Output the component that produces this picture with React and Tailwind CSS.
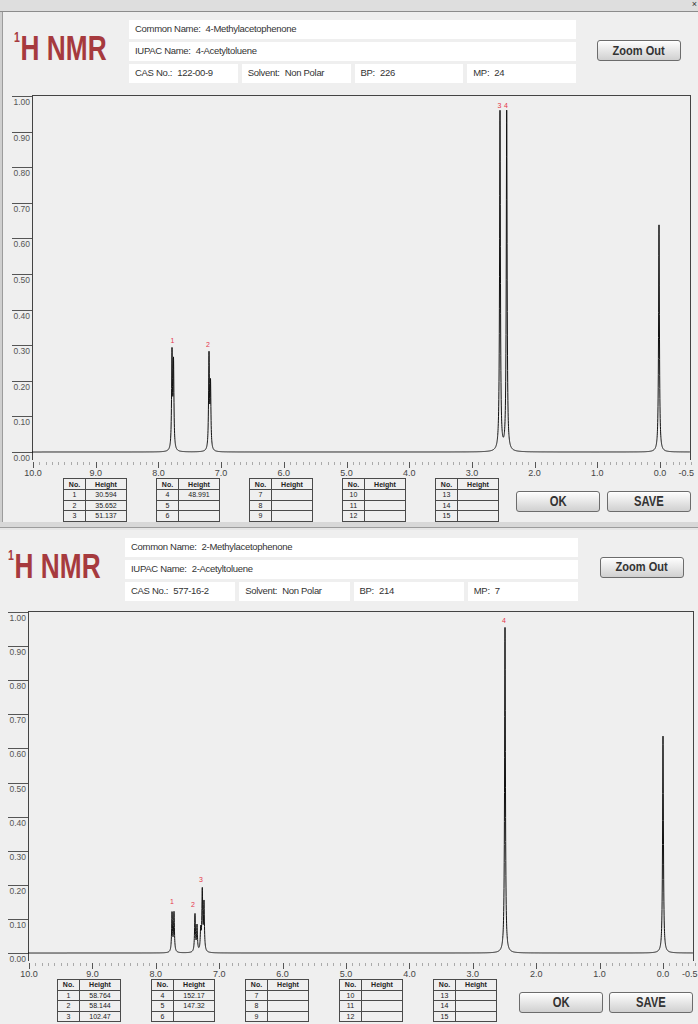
import React from "react";

const FONT = "font-['Liberation_Sans',Arial,sans-serif]";

const emptyRows = (from) => [
  [from, ""],
  [from + 1, ""],
  [from + 2, ""],
];

const panels = [
  {
    id: "p1",
    common: "4-Methylacetophenone",
    iupac: "4-Acetyltoluene",
    cas: "122-00-9",
    solvent: "Non Polar",
    bp: "226",
    mp: "24",
    panelClass: "shadow-[inset_2px_0_0_#cfcfcf,inset_3px_0_0_#9c9c9c]",
    titleCol: "w-[129px] pl-[14px]",
    infoCol: "w-[447px]",
    zoomBtn: "ml-[21px] mt-[20px]",
    chartGap: "mt-[10px]",
    tableRow: "pl-[63px]",
    tableGap: "gap-[29px]",
    btnRow: "ml-[17px] gap-[7px]",
    chart: { base: 359, x0: 660, k: 62.7, axisX: 32, rightX: 690, negShift: 5 },
    peaks: [
      { ppm: 7.783, h: 0.27 },
      { ppm: 7.759, h: 0.24 },
      { ppm: 7.193, h: 0.265 },
      { ppm: 7.169, h: 0.18 },
      { ppm: 2.552, h: 0.955 },
      { ppm: 2.445, h: 0.955 },
      { ppm: 0.016, h: 0.638 },
    ],
    labels: [
      { t: "1", x: 172.5, y: 250 },
      { t: "2", x: 208, y: 254 },
      { t: "3", x: 499.5, y: 15 },
      { t: "4", x: 506, y: 15 },
    ],
    tables: [
      [[1, "30.594"], [2, "35.652"], [3, "51.137"]],
      [[4, "48.991"], [5, ""], [6, ""]],
      emptyRows(7),
      emptyRows(10),
      emptyRows(13),
    ],
  },
  {
    id: "p2",
    common: "2-Methylacetophenone",
    iupac: "2-Acetyltoluene",
    cas: "577-16-2",
    solvent: "Non Polar",
    bp: "214",
    mp: "7",
    panelClass: "",
    titleCol: "w-[125px] pl-[8px]",
    infoCol: "w-[453px]",
    zoomBtn: "ml-[22px] mt-[19px]",
    chartGap: "mt-[8px]",
    tableRow: "pl-[57px]",
    tableGap: "gap-[30px]",
    btnRow: "ml-[22px] gap-[6px]",
    chart: { base: 344, x0: 663, k: 63.4, axisX: 28, rightX: 693, negShift: 5 },
    peaks: [
      { ppm: 7.744, h: 0.115 },
      { ppm: 7.713, h: 0.115 },
      { ppm: 7.382, h: 0.11 },
      { ppm: 7.35, h: 0.075 },
      { ppm: 7.292, h: 0.06 },
      { ppm: 7.267, h: 0.175 },
      { ppm: 7.24, h: 0.14 },
      { ppm: 2.492, h: 0.955 },
      { ppm: 0.0, h: 0.636 },
    ],
    labels: [
      { t: "1", x: 172, y: 904 - 609 },
      { t: "2", x: 193, y: 907 - 609 },
      { t: "3", x: 201, y: 882 - 609 },
      { t: "4", x: 504, y: 623 - 609 },
    ],
    tables: [
      [[1, "58.764"], [2, "58.144"], [3, "102.47"]],
      [[4, "152.17"], [5, "147.32"], [6, ""]],
      emptyRows(7),
      emptyRows(10),
      emptyRows(13),
    ],
  },
];

function Spectrum({ chart, peaks, labels }) {
  const { base, x0, k, axisX, rightX, negShift } = chart;
  const top = 3;
  const yOf = (v) => base - v * (base - top);
  const xOf = (ppm) => x0 - k * ppm;
  const w = 0.5;

  // lorentzian lines summed over the whole axis
  const pts = [];
  for (let x = axisX; x <= rightX; x += 0.1) {
    let v = 0;
    for (const p of peaks) {
      const dx = (x - xOf(p.ppm)) / w;
      v += p.h / (1 + dx * dx);
    }
    pts.push(`${x.toFixed(1)},${yOf(v).toFixed(2)}`);
  }

  const yTicks = [];
  for (let i = 0; i <= 10; i++) {
    const v = i / 10;
    const y = Math.round(yOf(v)) + 0.5;
    yTicks.push(
      <g key={i}>
        <line x1={axisX - 20} y1={y} x2={axisX} y2={y} stroke="#555" strokeWidth="1" />
        <text x={axisX - 2} y={y + 8} fontSize="8.5" fill="#555" textAnchor="end">
          {v.toFixed(2)}
        </text>
      </g>
    );
  }

  const xTicks = [];
  for (let i = 0; i <= 105; i++) {
    const ppm = 10 - i / 10;
    const x = Math.round(xOf(ppm)) + 0.5;
    const major = i % 10 === 0;
    xTicks.push(
      <line
        key={i}
        x1={x}
        y1={base + 10}
        x2={x}
        y2={base + (major ? 16 : 13)}
        stroke={major ? "#555" : "#aaa"}
        strokeWidth="1"
      />
    );
  }

  const xLabels = [];
  for (let n = 10; n >= 0; n--) {
    xLabels.push(
      <text key={n} x={xOf(n)} y={base + 24} fontSize="9" fill="#444" textAnchor="middle">
        {n.toFixed(1)}
      </text>
    );
  }
  xLabels.push(
    <text key="neg" x={xOf(-0.5) - negShift} y={base + 24} fontSize="9" fill="#444" textAnchor="middle">
      -0.5
    </text>
  );

  const ax = axisX + 0.5;
  const rx = rightX + 0.5;

  return (
    <svg
      width="698"
      height={base + 26}
      className="block"
      fontFamily="Liberation Sans, Arial, sans-serif"
    >
      {yTicks}
      <line x1={ax} y1={2} x2={ax} y2={base + 8} stroke="#444" strokeWidth="1" />
      <line x1={ax} y1={2.5} x2={rx} y2={2.5} stroke="#444" strokeWidth="1" />
      <line x1={rx} y1={2} x2={rx} y2={base + 8} stroke="#444" strokeWidth="1" />
      <polyline points={pts.join(" ")} fill="none" stroke="#111" strokeWidth="1" />
      {xTicks}
      {xLabels}
      {labels.map((l) => (
        <text key={l.t} x={l.x} y={l.y} fontSize="7" fill="#e5364a" textAnchor="middle">
          {l.t}
        </text>
      ))}
    </svg>
  );
}

function PeakTable({ rows }) {
  return (
    <table className="w-[64px] border-collapse border border-[#4a4a4a] text-[7px] leading-none text-[#222]">
      <thead>
        <tr className="h-[11px]">
          <th className="w-[22px] border border-[#4a4a4a] font-bold">No.</th>
          <th className="border border-[#4a4a4a] font-bold">Height</th>
        </tr>
      </thead>
      <tbody>
        {rows.map(([n, h]) => (
          <tr key={n} className="h-[10.5px]">
            <td className="border border-[#4a4a4a] text-center">{n}</td>
            <td className="border border-[#4a4a4a] text-center">{h}</td>
          </tr>
        ))}
      </tbody>
    </table>
  );
}

function Button({ children, className, textClass }) {
  return (
    <button
      type="button"
      className={`flex items-center justify-center rounded-[3px] border border-[#6c6c6c] bg-linear-to-b from-[#fefefe] to-[#d0d0d0] font-bold text-[#333] shadow-[inset_0_1px_0_#fff] ${className}`}
    >
      <span className={`inline-block ${textClass}`}>{children}</span>
    </button>
  );
}

function InfoBox({ label, value, className = "" }) {
  return (
    <div className={`flex items-center bg-white px-[6px] text-[9.5px] tracking-[-0.3px] text-[#333] ${className}`}>
      <span>{label}</span>
      <span className="ml-[5px]">{value}</span>
    </div>
  );
}

function NmrPanel({ p }) {
  return (
    <div className={`bg-[#efefef] pt-[8px] ${p.panelClass}`}>
      <div className="flex items-start">
        <div className={`mt-[10px] ${p.titleCol}`}>
          <div className="inline-block origin-left scale-x-75 whitespace-nowrap text-[35px] font-bold leading-none text-[#a63a3e]">
            <span className="mr-[1px] align-top text-[14px] leading-none">1</span>H NMR
          </div>
        </div>
        <div className={`flex flex-col gap-[3px] ${p.infoCol}`}>
          <InfoBox className="h-[19px]" label="Common Name:" value={p.common} />
          <InfoBox className="h-[19px]" label="IUPAC Name:" value={p.iupac} />
          <div className="grid h-[19px] grid-cols-4 gap-[4px]">
            <InfoBox label="CAS No.:" value={p.cas} />
            <InfoBox label="Solvent:" value={p.solvent} />
            <InfoBox label="BP:" value={p.bp} />
            <InfoBox label="MP:" value={p.mp} />
          </div>
        </div>
        <Button className={`h-[21px] w-[84px] text-[13px] ${p.zoomBtn}`} textClass="scale-x-[0.85]">
          Zoom Out
        </Button>
      </div>

      <div className={p.chartGap}>
        <Spectrum chart={p.chart} peaks={p.peaks} labels={p.labels} />
      </div>

      <div className={`flex items-start ${p.tableRow}`}>
        <div className={`flex ${p.tableGap}`}>
          {p.tables.map((rows, i) => (
            <PeakTable key={i} rows={rows} />
          ))}
        </div>
        <div className={`mt-[13px] flex ${p.btnRow}`}>
          <Button className="h-[21px] w-[84px] text-[15px]" textClass="scale-x-75">
            OK
          </Button>
          <Button className="h-[21px] w-[84px] text-[15px]" textClass="scale-x-75">
            SAVE
          </Button>
        </div>
      </div>
    </div>
  );
}

export default function App() {
  return (
    <div className={`h-[1024px] w-[698px] overflow-hidden bg-[#efefef] ${FONT}`}>
      <div className="flex h-[12px] justify-end border-b border-[#8c8c8c] bg-[#dedede] pr-[1px] text-[9px] leading-[9px] text-[#333]">
        <span>×</span>
      </div>
      <NmrPanel p={panels[0]} />
      <div className="h-[5px] bg-[#d8d8d8]" />
      <div className="h-[1px] bg-[#9c9c9c]" />
      <div className="h-[2px] bg-[#e6e6e6]" />
      <NmrPanel p={panels[1]} />
    </div>
  );
}
